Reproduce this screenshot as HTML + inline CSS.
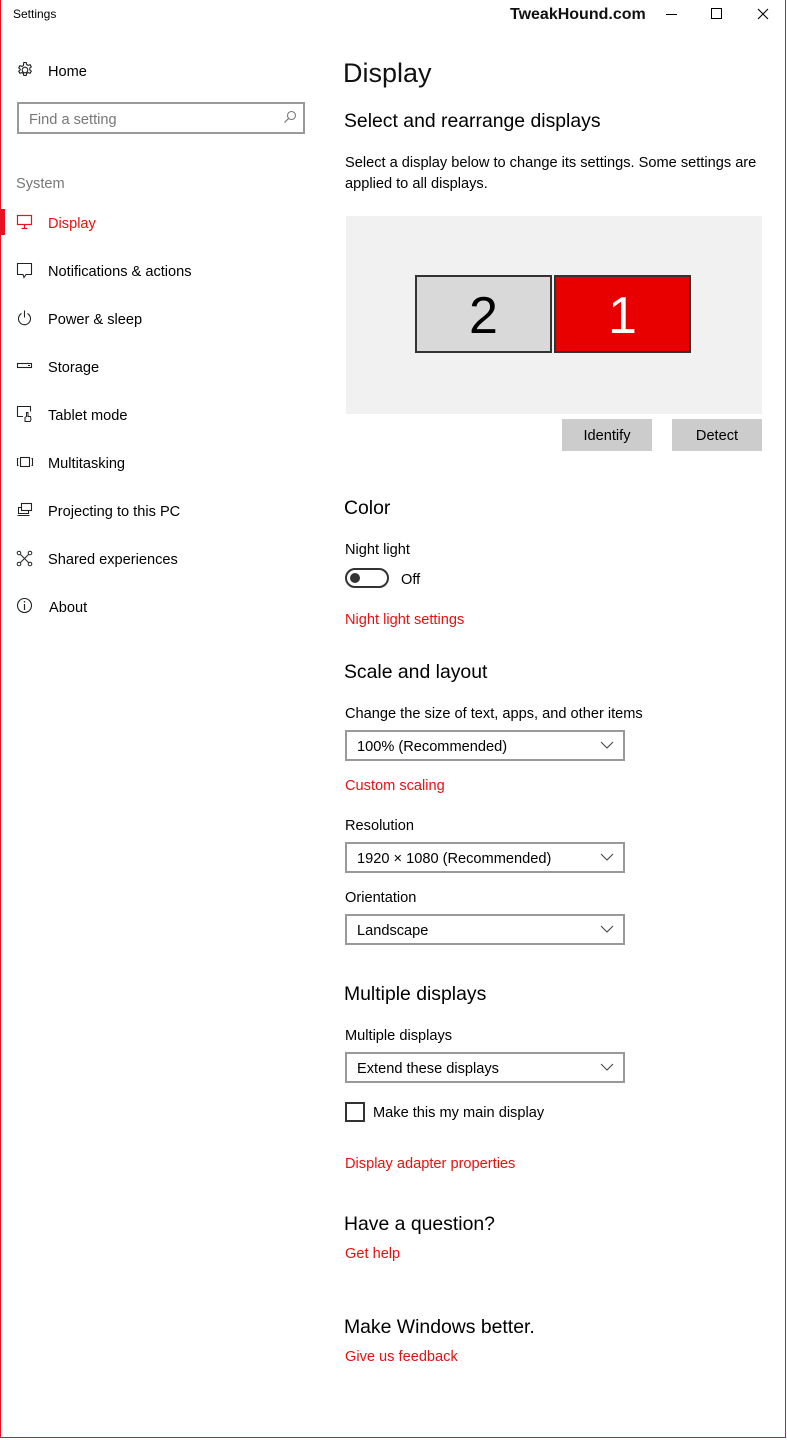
<!DOCTYPE html>
<html><head><meta charset="utf-8"><style>
*{margin:0;padding:0;box-sizing:border-box}
body{width:787px;height:1440px;background:#fff;font-family:"Liberation Sans",sans-serif;color:#000;position:relative;overflow:hidden}
.t{position:absolute;white-space:nowrap;line-height:20px;font-size:14.6px;margin-top:2px}
.h{font-size:19.4px;line-height:26px}
.r{color:#e81010}
.dd{position:absolute;left:345px;width:280px;height:31px;border:2px solid #999;}
.dd span{position:absolute;left:10px;top:5px;font-size:14.6px;line-height:20px}
.dd svg{position:absolute;right:9px;top:9px}
.ic{position:absolute;left:16px}
</style></head><body>
<div style="position:absolute;left:0;top:0;width:787px;height:1438px;border:1px solid #e81123;border-top:none"></div>
<div style="position:absolute;left:785px;top:0;width:2px;height:1438px;background:#fff"></div>
<div style="position:absolute;left:785px;top:0;width:1px;height:1438px;background:#e81123"></div>
<div class="t" style="left:13px;top:3px;font-size:12px;line-height:18px">Settings</div>
<div class="t" style="left:510px;top:2px;font-size:16px;line-height:22px;font-weight:bold;color:#111">TweakHound.com</div>
<div style="position:absolute;left:666px;top:14px;width:11px;height:1px;background:#000"></div>
<div style="position:absolute;left:711px;top:8px;width:11px;height:11px;border:1px solid #000"></div>
<svg style="position:absolute;left:757px;top:8px" width="12" height="12"><path d="M1 1L11 11M11 1L1 11" stroke="#000" stroke-width="1.1"/></svg>

<svg class="ic" style="top:61px" width="18" height="18" viewBox="0 0 18 18"><circle cx="9" cy="9" r="2.8" fill="none" stroke="#222" stroke-width="1.1"/><path d="M7.8 1.5h2.4l.4 2 1.6.9 1.9-.7 1.2 2.1-1.5 1.3v1.8l1.5 1.3-1.2 2.1-1.9-.7-1.6.9-.4 2H7.8l-.4-2-1.6-.9-1.9.7-1.2-2.1 1.5-1.3V8.1L2.7 6.8l1.2-2.1 1.9.7 1.6-.9z" fill="none" stroke="#222" stroke-width="1.1"/></svg>
<div class="t" style="left:48px;top:60px">Home</div>
<div style="position:absolute;left:17px;top:102px;width:288px;height:32px;border:2px solid #999"></div>
<div class="t" style="left:29px;top:108px;color:#777">Find a setting</div>
<svg style="position:absolute;left:283px;top:110px" width="14" height="14"><circle cx="8.5" cy="5.5" r="4" fill="none" stroke="#777" stroke-width="1.1"/><path d="M5.6 8.4L1.5 12.5" stroke="#777" stroke-width="1.2"/></svg>
<div class="t" style="left:16px;top:172px;color:#767676">System</div>

<div style="position:absolute;left:0;top:209px;width:5px;height:26px;background:#e81123"></div>
<svg class="ic" style="top:214px" width="18" height="16"><rect x="1.5" y="1.5" width="14" height="9" fill="none" stroke="#e81123" stroke-width="1.2"/><path d="M8.5 11v3M5.5 14.5h6" stroke="#e81123" stroke-width="1.2"/></svg>
<div class="t r" style="left:48px;top:212px">Display</div>

<svg class="ic" style="top:262px" width="18" height="18"><path d="M1.5 1.5h14v11H10l-2 3-1-3H1.5z" fill="none" stroke="#222" stroke-width="1.1"/></svg>
<div class="t" style="left:48px;top:260px">Notifications &amp; actions</div>
<svg class="ic" style="top:309px" width="18" height="18"><path d="M5.5 4.5A6 6 0 1 0 11.5 4.5" fill="none" stroke="#222" stroke-width="1.1"/><path d="M8.5 1.5v7" stroke="#222" stroke-width="1.1"/></svg>
<div class="t" style="left:48px;top:308px">Power &amp; sleep</div>
<svg class="ic" style="top:361px" width="18" height="10"><rect x="1.5" y="2.5" width="14" height="4" fill="none" stroke="#222" stroke-width="1.1"/><path d="M12 4.5h2" stroke="#222"/></svg>
<div class="t" style="left:48px;top:356px">Storage</div>
<svg class="ic" style="top:405px" width="18" height="18"><path d="M7 11.5H1.5v-10h13v5" fill="none" stroke="#222" stroke-width="1.1"/><path d="M9 16.5v-4l1.5-1V7.5h1.5v4h2.5l.5 3-1 2z" fill="none" stroke="#222" stroke-width="1"/></svg>
<div class="t" style="left:48px;top:404px">Tablet mode</div>
<svg class="ic" style="top:456px" width="18" height="12"><rect x="4.5" y="1.5" width="9" height="9" fill="none" stroke="#222" stroke-width="1.1"/><path d="M2.5 2.5h-1v7h1M15.5 2.5h1v7h-1" fill="none" stroke="#222" stroke-width="1.1"/></svg>
<div class="t" style="left:48px;top:452px">Multitasking</div>
<svg class="ic" style="top:502px" width="18" height="16"><rect x="5.5" y="1.5" width="10" height="7" fill="none" stroke="#222" stroke-width="1.1"/><path d="M5.5 5.5h-3v6h10v-3M1.5 13.5h12" fill="none" stroke="#222" stroke-width="1.1"/></svg>
<div class="t" style="left:48px;top:500px">Projecting to this PC</div>
<svg class="ic" style="top:550px" width="18" height="18"><circle cx="3" cy="3" r="1.8" fill="none" stroke="#222"/><circle cx="14" cy="3" r="1.8" fill="none" stroke="#222"/><circle cx="3" cy="14" r="1.8" fill="none" stroke="#222"/><circle cx="14" cy="14" r="1.8" fill="none" stroke="#222"/><path d="M4.5 4.5l8 8M12.5 4.5l-8 8" stroke="#222"/></svg>
<div class="t" style="left:48px;top:548px">Shared experiences</div>
<svg class="ic" style="top:597px" width="18" height="18"><circle cx="8.5" cy="8.5" r="7" fill="none" stroke="#222" stroke-width="1.1"/><path d="M8.5 7v6" stroke="#222" stroke-width="1.2"/><circle cx="8.5" cy="4.8" r=".8" fill="#222"/></svg>
<div class="t" style="left:49px;top:596px">About</div>

<div class="t" style="left:343px;top:54px;font-size:27px;line-height:34px;color:#111">Display</div>
<div class="t h" style="left:344px;top:106px">Select and rearrange displays</div>
<div class="t" style="left:345px;top:151px">Select a display below to change its settings. Some settings are</div>
<div class="t" style="left:345px;top:172px">applied to all displays.</div>
<div style="position:absolute;left:346px;top:216px;width:416px;height:198px;background:#f1f1f1"></div>
<div style="position:absolute;left:415px;top:275px;width:137px;height:78px;background:#d9d9d9;border:2px solid #333;font-size:52px;line-height:78px;text-align:center;color:#000">2</div>
<div style="position:absolute;left:554px;top:275px;width:137px;height:78px;background:#e80000;border:2px solid #333;font-size:52px;line-height:78px;text-align:center;color:#fff">1</div>
<div style="position:absolute;left:562px;top:419px;width:90px;height:32px;background:#ccc;font-size:14.6px;line-height:34px;text-align:center">Identify</div>
<div style="position:absolute;left:672px;top:419px;width:90px;height:32px;background:#ccc;font-size:14.6px;line-height:34px;text-align:center">Detect</div>

<div class="t h" style="left:344px;top:493px">Color</div>
<div class="t" style="left:345px;top:538px">Night light</div>
<div style="position:absolute;left:345px;top:568px;width:44px;height:20px;border:2px solid #333;border-radius:10px"></div>
<div style="position:absolute;left:350px;top:573px;width:10px;height:10px;border-radius:50%;background:#333"></div>
<div class="t" style="left:401px;top:568px">Off</div>
<div class="t r" style="left:345px;top:608px">Night light settings</div>

<div class="t h" style="left:344px;top:657px">Scale and layout</div>
<div class="t" style="left:345px;top:702px">Change the size of text, apps, and other items</div>
<div class="dd" style="top:730px"><span>100% (Recommended)</span><svg width="14" height="9"><path d="M1 1l6 6 6-6" fill="none" stroke="#444" stroke-width="1.1"/></svg></div>
<div class="t r" style="left:345px;top:774px">Custom scaling</div>
<div class="t" style="left:345px;top:814px">Resolution</div>
<div class="dd" style="top:842px"><span>1920 × 1080 (Recommended)</span><svg width="14" height="9"><path d="M1 1l6 6 6-6" fill="none" stroke="#444" stroke-width="1.1"/></svg></div>
<div class="t" style="left:345px;top:886px">Orientation</div>
<div class="dd" style="top:914px"><span>Landscape</span><svg width="14" height="9"><path d="M1 1l6 6 6-6" fill="none" stroke="#444" stroke-width="1.1"/></svg></div>

<div class="t h" style="left:344px;top:979px">Multiple displays</div>
<div class="t" style="left:345px;top:1024px">Multiple displays</div>
<div class="dd" style="top:1052px"><span>Extend these displays</span><svg width="14" height="9"><path d="M1 1l6 6 6-6" fill="none" stroke="#444" stroke-width="1.1"/></svg></div>
<div style="position:absolute;left:345px;top:1102px;width:20px;height:20px;border:2px solid #333"></div>
<div class="t" style="left:373px;top:1101px">Make this my main display</div>
<div class="t r" style="left:345px;top:1152px">Display adapter properties</div>

<div class="t h" style="left:344px;top:1209px">Have a question?</div>
<div class="t r" style="left:345px;top:1242px">Get help</div>
<div class="t h" style="left:344px;top:1312px">Make Windows better.</div>
<div class="t r" style="left:345px;top:1345px">Give us feedback</div>
</body></html>
